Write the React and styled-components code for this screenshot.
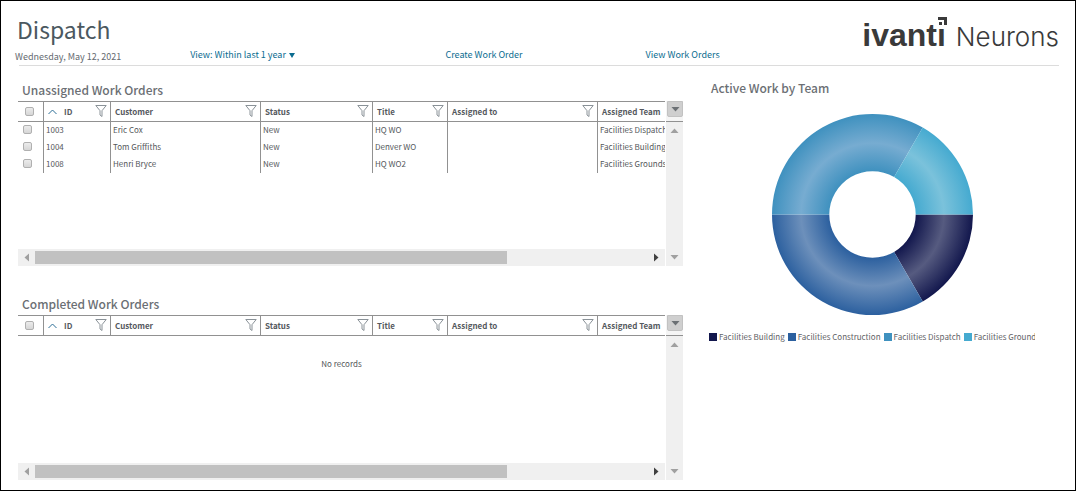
import React, { useState } from "react";
import styled, { createGlobalStyle } from "styled-components";

const GlobalStyle = createGlobalStyle`
  * {
    box-sizing: border-box;
  }

  body {
    margin: 0;
    background-color: #fff;
    color: #55585b;
    font-family: "Noto Sans CJK SC", "Open Sans", sans-serif;
    font-size: 8px;
  }

  button,
  input,
  select {
    margin: 0;
    padding: 0;
    border: none;
    background: none;
    color: inherit;
    font: inherit;
  }

  button {
    cursor: pointer;
  }
`;

const Page = styled.div`
  min-height: 100vh;
  border: 1px solid #000;
  overflow: hidden;
`;

const Header = styled.header`
  padding: 11px 16px 0 14px;
`;

const TitleRow = styled.div`
  display: flex;
  justify-content: space-between;
  align-items: flex-start;
  height: 36px;
  padding-left: 2px;
`;

const Title = styled.h1`
  margin: 0;
  font-size: 23px;
  line-height: 34px;
  font-weight: 400;
  color: #4b5860;
`;

const Logo = styled.div`
  display: flex;
  align-items: baseline;
  gap: 10px;
  padding-top: 6px;
  line-height: 34px;
  color: #3a3a3a;
`;

const Brand = styled.span`
  position: relative;
  font-family: "Liberation Sans", Arial, sans-serif;
  font-size: 32px;
  font-weight: 700;

  svg {
    position: absolute;
    top: -1px;
    right: -1px;
  }
`;

const Product = styled.span`
  font-family: Inter, "Liberation Sans", sans-serif;
  font-size: 26px;
  font-weight: 300;
`;

const Toolbar = styled.nav`
  display: grid;
  grid-template-columns: 175fr 255fr 200fr 413fr;
  height: 17px;
  padding-bottom: 1px;
  font-size: 9px;
  line-height: 14px;
  color: #0b6c90;

  a {
    color: inherit;
    text-decoration: none;
  }
`;

const Today = styled.span`
  align-self: end;
  color: #646a70;
`;

const ViewPicker = styled.label`
  display: flex;
  align-items: center;
  gap: 2px;
  height: 14px;

  select {
    appearance: none;
    height: 14px;
    line-height: 14px;
  }
`;

const Divider = styled.hr`
  margin: 0 0 0 4px;
  border: none;
  border-top: 1px solid #dcdcdc;
`;

const Main = styled.main`
  display: grid;
  grid-template-columns: minmax(0, 665fr) minmax(0, 326fr);
  gap: 26px;
  padding: 13px 40px 10px 17px;
`;

const Lists = styled.div`
  display: flex;
  flex-direction: column;
  gap: 27px;
`;

const Heading = styled.h2`
  margin: 0;
  padding-left: ${({ $inset }) => $inset}px;
  font-size: 12px;
  line-height: 22px;
  font-weight: 500;
  color: #6b6f74;
`;

const GridBox = styled.div`
  display: grid;
  grid-template-columns: minmax(0, 1fr) 17px;
  column-gap: 1px;
`;

const Viewport = styled.div`
  min-height: 148px;
  overflow: hidden;
`;

const Table = styled.table`
  width: 730px;
  table-layout: fixed;
  border-collapse: separate;
  border-spacing: 0;
  text-align: left;
`;

const HeadCell = styled.th`
  height: 21px;
  padding: 0 3px 0 4px;
  border: solid #919191;
  border-width: 1px 1px 1px 0;
  font-weight: 700;
  color: #55595e;
`;

const HeadContent = styled.div`
  display: flex;
  align-items: center;
  gap: 7px;
  height: 19px;
  line-height: 19px;
  white-space: nowrap;

  button {
    display: flex;
    margin-left: auto;
  }
`;

const Cell = styled.td`
  height: 17px;
  padding: 0 2px 2px;
  border-right: 1px solid #919191;
  line-height: 15px;
  white-space: nowrap;
`;

const Check = styled.input`
  appearance: none;
  display: block;
  width: 9px;
  height: 9px;
  margin-left: 3px;
  border: 1px solid #b0b0b0;
  border-radius: 2px;
  background: linear-gradient(#ececec, #d6d6d6);

  &:checked {
    background: #0b6c90;
  }
`;

const Empty = styled.p`
  margin: 0;
  padding-top: 20px;
  line-height: 15px;
  text-align: center;
`;

const Side = styled.div`
  grid-row: span 2;
  display: flex;
  flex-direction: column;
`;

const MenuSlot = styled.div`
  height: 21px;
  padding-left: 1px;
  border-bottom: 1px solid #919191;
  background-color: #f5f5f5;

  button {
    display: flex;
    align-items: center;
    justify-content: center;
    width: 16px;
    height: 16px;
    border: 1px solid #c2c2c2;
    border-radius: 0 0 2px 2px;
    background-color: #cfcfcf;
  }
`;

const ScrollBar = styled.div`
  display: flex;
  flex-direction: ${({ $vertical }) => ($vertical ? "column" : "row")};
  justify-content: space-between;
  flex: 1;
  min-height: 17px;
  background-color: #f0f0f0;

  button {
    display: flex;
    flex: none;
    align-items: center;
    justify-content: center;
    width: 17px;
    height: 17px;
  }
`;

const Track = styled.div`
  flex: 1;
  padding: 2px 0;
`;

const Thumb = styled.div`
  width: 77%;
  height: 13px;
  background-color: #c1c1c1;
`;

const Chart = styled.section`
  svg {
    display: block;
    width: 201px;
    max-width: 100%;
    margin: 17px auto 14px;
  }
`;

const ChartHeading = styled(Heading)`
  line-height: 18px;
`;

const Legend = styled.ul`
  display: flex;
  gap: 3px;
  margin: 0;
  padding: 0;
  overflow: hidden;
  list-style: none;
  line-height: 15px;
  color: #5f6266;
`;

const LegendItem = styled.li`
  display: flex;
  flex: none;
  align-items: center;
  gap: 2px;

  &::before {
    content: "";
    width: 8px;
    height: 8px;
    background-color: ${({ $color }) => $color};
  }
`;

const columns = [
  { key: "id", label: "ID", width: 67, sorted: true },
  { key: "customer", label: "Customer", width: 150 },
  { key: "status", label: "Status", width: 112 },
  { key: "title", label: "Title", width: 75 },
  { key: "assignee", label: "Assigned to", width: 150 },
  { key: "team", label: "Assigned Team", width: 150 },
];

const unassigned = [
  { id: "1003", customer: "Eric Cox", status: "New", title: "HQ WO", team: "Facilities Dispatch" },
  { id: "1004", customer: "Tom Griffiths", status: "New", title: "Denver WO", team: "Facilities Building" },
  { id: "1008", customer: "Henri Bryce", status: "New", title: "HQ WO2", team: "Facilities Grounds" },
];

// angles in degrees, clockwise from the right
const teams = [
  { name: "Facilities Building", color: "#12174d", light: "#565b80", from: 0, to: 60 },
  { name: "Facilities Construction", color: "#2c609f", light: "#6d90bb", from: 60, to: 180 },
  { name: "Facilities Dispatch", color: "#3f91bf", light: "#77acd1", from: 180, to: 300 },
  { name: "Facilities Grounds", color: "#45aad0", light: "#7bc2db", from: 300, to: 360 },
];

function point(radius, angle) {
  const rad = (angle * Math.PI) / 180;
  return `${radius * Math.cos(rad)} ${radius * Math.sin(rad)}`;
}

function slicePath({ from, to }) {
  return `M${point(100, from)} A100 100 0 0 1 ${point(100, to)} L${point(43, to)} A43 43 0 0 0 ${point(43, from)} Z`;
}

function Arrow({ turn = 0, color = "#a0a0a0" }) {
  return (
    <svg width="9" height="9" viewBox="0 0 9 9" aria-hidden="true">
      <path d="M0.5 7 L4.5 2.5 L8.5 7 Z" fill={color} transform={`rotate(${turn} 4.5 4.5)`} />
    </svg>
  );
}

function FilterIcon() {
  return (
    <svg width="12" height="13" viewBox="0 0 12 13" fill="none" stroke="#8a9298" aria-hidden="true">
      <path d="M0.8 0.5 H11.2 L7 5.7 V11.5 L5 10 V5.7 Z" />
    </svg>
  );
}

function WorkOrders({ title, rows }) {
  const [checked, setChecked] = useState([]);
  const allChecked = rows.length > 0 && checked.length === rows.length;

  function toggle(id) {
    setChecked(checked.includes(id) ? checked.filter((c) => c !== id) : [...checked, id]);
  }

  return (
    <section>
      <Heading $inset={4}>{title}</Heading>
      <GridBox>
        <Viewport>
          <Table aria-label={title}>
            <colgroup>
              <col style={{ width: 26 }} />
              {columns.map((col) => (
                <col key={col.key} style={{ width: col.width }} />
              ))}
            </colgroup>
            <thead>
              <tr>
                <HeadCell>
                  <Check
                    type="checkbox"
                    aria-label="Select all"
                    checked={allChecked}
                    onChange={() => setChecked(allChecked ? [] : rows.map((r) => r.id))}
                  />
                </HeadCell>
                {columns.map((col) => (
                  <HeadCell key={col.key}>
                    <HeadContent>
                      {col.sorted && (
                        <svg width="9" height="6" viewBox="0 0 9 6" fill="none" stroke="#2d6f96" aria-hidden="true">
                          <path d="M0.5 5 L4.5 1 L8.5 5" />
                        </svg>
                      )}
                      {col.label}
                      <button type="button" aria-label={`Filter ${col.label}`}>
                        <FilterIcon />
                      </button>
                    </HeadContent>
                  </HeadCell>
                ))}
              </tr>
            </thead>
            <tbody>
              {rows.map((row) => (
                <tr key={row.id}>
                  <Cell>
                    <Check
                      type="checkbox"
                      aria-label={`Select ${row.id}`}
                      checked={checked.includes(row.id)}
                      onChange={() => toggle(row.id)}
                    />
                  </Cell>
                  {columns.map((col) => (
                    <Cell key={col.key}>{row[col.key]}</Cell>
                  ))}
                </tr>
              ))}
            </tbody>
          </Table>
          {rows.length === 0 && <Empty>No records</Empty>}
        </Viewport>
        <Side>
          <MenuSlot>
            <button type="button" aria-label="Columns">
              <Arrow turn={180} color="#6c7175" />
            </button>
          </MenuSlot>
          <ScrollBar $vertical>
            <button type="button" aria-label="Scroll up">
              <Arrow />
            </button>
            <button type="button" aria-label="Scroll down">
              <Arrow turn={180} />
            </button>
          </ScrollBar>
        </Side>
        <ScrollBar>
          <button type="button" aria-label="Scroll left">
            <Arrow turn={270} />
          </button>
          <Track>
            <Thumb />
          </Track>
          <button type="button" aria-label="Scroll right">
            <Arrow turn={90} color="#404040" />
          </button>
        </ScrollBar>
      </GridBox>
    </section>
  );
}

export default function App() {
  return (
    <>
      <GlobalStyle />
      <Page>
        <Header>
          <TitleRow>
            <Title>Dispatch</Title>
            <Logo>
              <Brand>
                ivanti
                <svg width="10" height="12" viewBox="0 0 10 12" aria-hidden="true">
                  <rect width="10" height="12" fill="#fff" />
                  <path d="M1 0 H10 V8 H7 V3 H1 Z M2 5 H5 V8 H2 Z" fill="#3a3a3a" />
                </svg>
              </Brand>
              <Product>Neurons</Product>
            </Logo>
          </TitleRow>
          <Toolbar>
            <Today>Wednesday, May 12, 2021</Today>
            <ViewPicker>
              View:
              <select>
                <option>Within last 1 year</option>
              </select>
              <svg width="6" height="5" viewBox="0 0 6 5" aria-hidden="true">
                <path d="M0 0 H6 L3 5 Z" fill="#0b6c90" />
              </svg>
            </ViewPicker>
            <a href="#create">Create Work Order</a>
            <a href="#view">View Work Orders</a>
          </Toolbar>
          <Divider />
        </Header>
        <Main>
          <Lists>
            <WorkOrders title="Unassigned Work Orders" rows={unassigned} />
            <WorkOrders title="Completed Work Orders" rows={[]} />
          </Lists>
          <Chart>
            <ChartHeading $inset={2}>Active Work by Team</ChartHeading>
            <svg viewBox="-100 -100 200 200" role="img" aria-label="Active Work by Team">
              {teams.map((team, i) => (
                <g key={team.name}>
                  <radialGradient id={`team-${i}`} gradientUnits="userSpaceOnUse" cx="0" cy="0" r="100">
                    <stop offset="0.43" stopColor={team.color} />
                    <stop offset="0.71" stopColor={team.light} />
                    <stop offset="1" stopColor={team.color} />
                  </radialGradient>
                  <path d={slicePath(team)} fill={`url(#team-${i})`} />
                </g>
              ))}
            </svg>
            <Legend>
              {teams.map((team) => (
                <LegendItem key={team.name} $color={team.color}>
                  {team.name}
                </LegendItem>
              ))}
            </Legend>
          </Chart>
        </Main>
      </Page>
    </>
  );
}
